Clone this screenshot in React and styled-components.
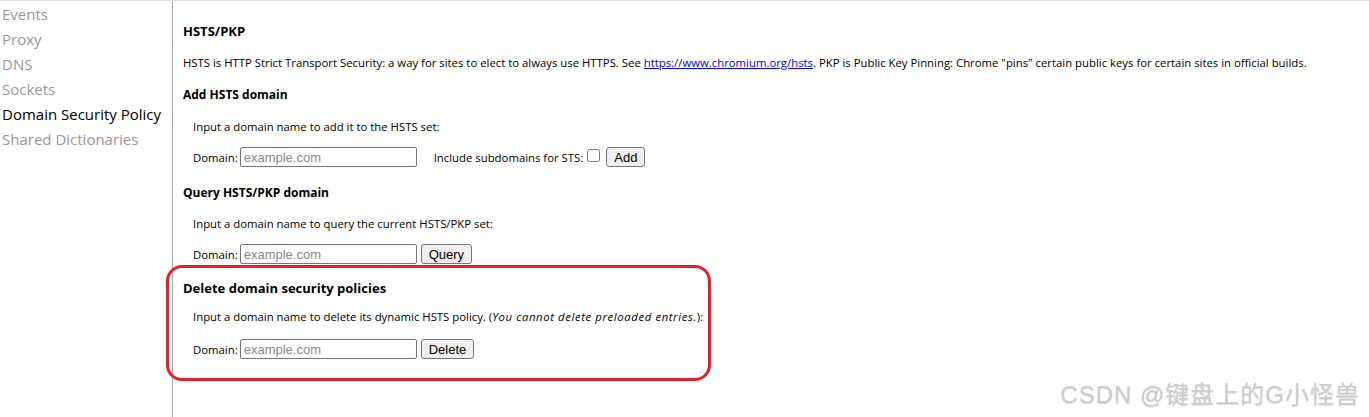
import React from "react";
import styled, { createGlobalStyle } from "styled-components";

const GlobalStyle = createGlobalStyle`
  html, body {
    margin: 0;
    padding: 0;
    background: #fff;
  }
  body {
    font-family: "Open Sans", "Noto Sans", sans-serif;
    color: #000;
  }
`;

const navItems = [
  "Events",
  "Proxy",
  "DNS",
  "Sockets",
  "Domain Security Policy",
  "Shared Dictionaries",
];

const App = () => {
  return (
    <>
      <GlobalStyle />
      <Page>
        <Sidebar>
          {navItems.map((item) => (
            <NavItem key={item} selected={item === "Domain Security Policy"}>
              {item}
            </NavItem>
          ))}
        </Sidebar>
        <Main>
          <Title>HSTS/PKP</Title>
          <Text>
            HSTS is HTTP Strict Transport Security: a way for sites to elect to
            always use HTTPS. See{" "}
            <Link href="#">https://www.chromium.org/hsts</Link>. PKP is Public
            Key Pinning: Chrome "pins" certain public keys for certain sites in
            official builds.
          </Text>

          <SubTitle>Add HSTS domain</SubTitle>
          <Indent>
            <Text>Input a domain name to add it to the HSTS set:</Text>
            <FormRow>
              <Label>Domain:</Label>
              <DomainInput placeholder="example.com" />
              <Label className="sts">Include subdomains for STS:</Label>
              <Check type="checkbox" />
              <Button>Add</Button>
            </FormRow>
          </Indent>

          <SubTitle className="query">Query HSTS/PKP domain</SubTitle>
          <Indent>
            <Text>Input a domain name to query the current HSTS/PKP set:</Text>
            <FormRow>
              <Label>Domain:</Label>
              <DomainInput placeholder="example.com" />
              <Button>Query</Button>
            </FormRow>
          </Indent>

          <Highlight>
            <SubTitle className="delete">Delete domain security policies</SubTitle>
            <Indent>
              <Text className="delete">
                Input a domain name to delete its dynamic HSTS policy. (
                <em>You cannot delete preloaded entries.</em>):
              </Text>
              <FormRow>
                <Label>Domain:</Label>
                <DomainInput placeholder="example.com" />
                <Button>Delete</Button>
              </FormRow>
            </Indent>
          </Highlight>
        </Main>
        <Watermark>CSDN @键盘上的G小怪兽</Watermark>
      </Page>
    </>
  );
};

const Page = styled.div`
  position: relative;
  display: flex;
  height: 417px;
  border-top: 1px solid #e3e3e3;
  box-sizing: border-box;
  overflow: hidden;
`;

const Sidebar = styled.nav`
  width: 173px;
  flex-shrink: 0;
  border-right: 1px solid #a9a9a9;
  padding-top: 1px;
  padding-left: 2px;
  box-sizing: border-box;
`;

const NavItem = styled.div`
  font-size: 15px;
  line-height: 25px;
  height: 25px;
  white-space: nowrap;
  color: ${(p) => (p.selected ? "#000" : "#999")};
`;

const Main = styled.main`
  flex: 1;
  padding-left: 10px;
  padding-top: 22px;
`;

const Title = styled.h2`
  margin: 0 0 16px;
  font-size: 13px;
  font-weight: 700;
  line-height: 16px;
`;

const SubTitle = styled.h3`
  margin: 16px 0 16px;
  font-size: 12px;
  font-weight: 700;
  line-height: 16px;

  &.query {
    margin: 18px 0 15px;
  }

  &.delete {
    margin: 0 0 13px;
    font-size: 13px;
  }
`;

const Text = styled.p`
  margin: 0;
  font-size: 11.35px;
  line-height: 16px;
  white-space: nowrap;

  em {
    font-style: italic;
    letter-spacing: 0.6px;
  }
`;

const Link = styled.a`
  color: #0000ee;
  text-decoration: underline;
`;

const Indent = styled.div`
  margin-left: 10px;

  ${Text} {
    margin-bottom: 12px;
  }
  ${Text}.delete {
    margin-bottom: 14px;
  }
`;

const FormRow = styled.div`
  display: flex;
  align-items: center;
  height: 20px;
`;

const Label = styled.span`
  font-size: 11.35px;
  margin-right: 2px;

  &.sts {
    margin-left: 13px;
    margin-right: 4px;
  }
`;

const DomainInput = styled.input`
  width: 177px;
  height: 20px;
  box-sizing: border-box;
  border: 1px solid #767676;
  border-radius: 2px;
  padding: 1px 3px;
  font-family: "Liberation Sans", Arial, sans-serif;
  font-size: 13px;
  margin-right: 4px;

  &::placeholder {
    color: #8a8a8a;
  }
`;

const Check = styled.input`
  width: 13px;
  height: 13px;
  margin: 0 6px 4px 0;
`;

const Button = styled.button`
  height: 20px;
  box-sizing: border-box;
  padding: 0 7px;
  border: 1px solid #767676;
  border-radius: 3px;
  background: #efefef;
  font-family: "Liberation Sans", Arial, sans-serif;
  font-size: 13px;
  color: #000;
`;

const Highlight = styled.section`
  margin: 1px 0 0 -17px;
  width: 545px;
  box-sizing: border-box;
  border: 3px solid #e5202a;
  border-radius: 16px;
  padding: 12px 0 19px 14px;
`;

const Watermark = styled.div`
  position: absolute;
  right: 9px;
  bottom: 7px;
  font-family: "Liberation Sans", "Noto Sans CJK SC", sans-serif;
  font-size: 24px;
  color: #cdcdcd;
  text-shadow: 0 1px 1px rgba(0, 0, 0, 0.15);
  letter-spacing: 1px;
`;

export default App;
